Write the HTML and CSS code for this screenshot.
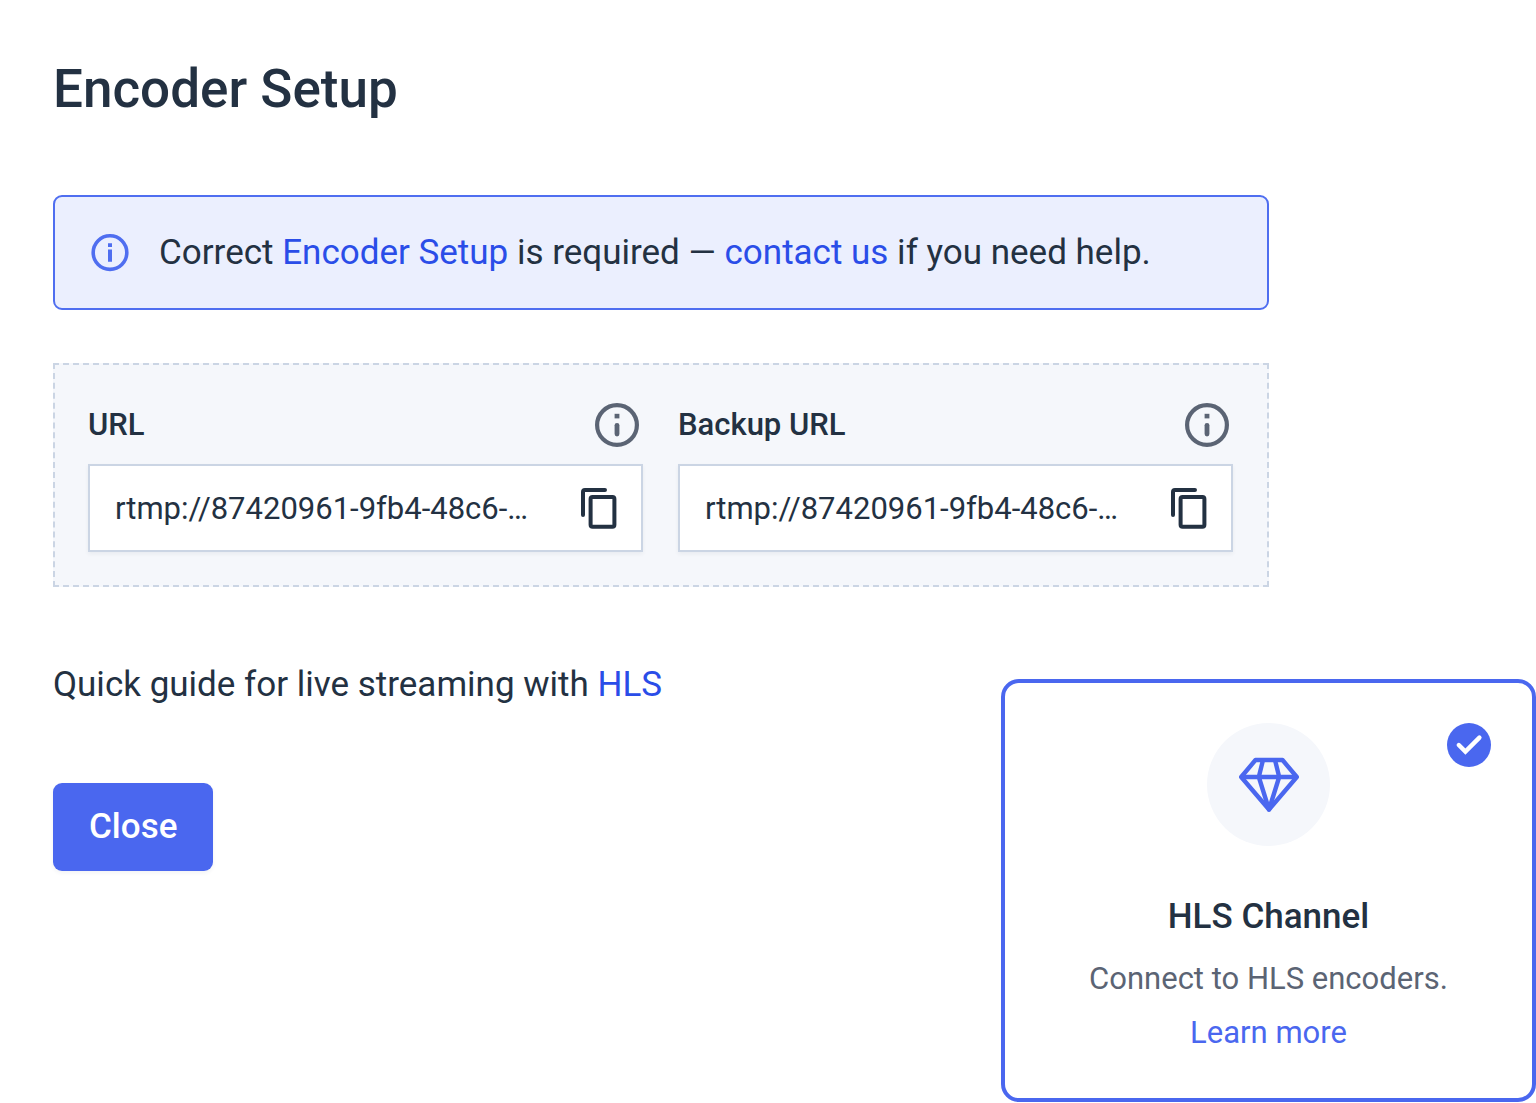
FILE: index.html
```html
<!DOCTYPE html>
<html lang="en">
<head>
    <meta charset="UTF-8">
    <meta name="viewport" content="width=device-width, initial-scale=1.0">
    <title>Encoder Setup</title>
    <link rel="stylesheet" href="styles.css">
</head>
<body>
    <main class="page">
        <h1>Encoder Setup</h1>

        <div class="alert">
            <svg class="alert-icon" width="38" height="38" viewBox="0 0 38 38" fill="none" stroke="currentColor">
                <circle cx="19" cy="18.6" r="16.8" stroke-width="3.6"/>
                <path d="M19 9.3v3.8M19 15.6v12.2" stroke-width="4"/>
            </svg>
            <p>Correct <a href="#">Encoder Setup</a> is required — <a href="#">contact us</a> if you need help.</p>
        </div>

        <div class="panel">
            <div class="field">
                <div class="field-head">
                    <label for="url">URL</label>
                    <button type="button" class="icon-button info" aria-label="About the URL">
                        <svg width="44" height="44" viewBox="0 0 44 44" fill="none" stroke="currentColor">
                            <circle cx="22" cy="22" r="19.9" stroke-width="4.2"/>
                            <path d="M22 10.8v4.6" stroke-width="4.8"/>
                            <path d="M22 22.3v8.8" stroke-width="4.8" stroke-linecap="round"/>
                        </svg>
                    </button>
                </div>
                <div class="input-box">
                    <input type="text" id="url" value="rtmp://87420961-9fb4-48c6-…" readonly>
                    <button type="button" class="icon-button copy" aria-label="Copy URL">
                        <svg width="40" height="44" viewBox="0 0 40 44" fill="none" stroke="currentColor" stroke-width="4" stroke-linecap="round">
                            <path d="M4 29V6a2 2 0 0 1 2-2h20"/>
                            <rect x="11.6" y="11" width="23.8" height="29.8" rx="2"/>
                        </svg>
                    </button>
                </div>
            </div>
            <div class="field">
                <div class="field-head">
                    <label for="backup-url">Backup URL</label>
                    <button type="button" class="icon-button info" aria-label="About the backup URL">
                        <svg width="44" height="44" viewBox="0 0 44 44" fill="none" stroke="currentColor">
                            <circle cx="22" cy="22" r="19.9" stroke-width="4.2"/>
                            <path d="M22 10.8v4.6" stroke-width="4.8"/>
                            <path d="M22 22.3v8.8" stroke-width="4.8" stroke-linecap="round"/>
                        </svg>
                    </button>
                </div>
                <div class="input-box">
                    <input type="text" id="backup-url" value="rtmp://87420961-9fb4-48c6-…" readonly>
                    <button type="button" class="icon-button copy" aria-label="Copy backup URL">
                        <svg width="40" height="44" viewBox="0 0 40 44" fill="none" stroke="currentColor" stroke-width="4" stroke-linecap="round">
                            <path d="M4 29V6a2 2 0 0 1 2-2h20"/>
                            <rect x="11.6" y="11" width="23.8" height="29.8" rx="2"/>
                        </svg>
                    </button>
                </div>
            </div>
        </div>

        <div class="bottom">
            <div class="guide">
                <p>Quick guide for live streaming with <a href="#">HLS</a></p>
                <button type="button" class="close">Close</button>
            </div>

            <section class="card">
                <svg class="check" width="44" height="44" viewBox="0 0 44 44" fill="none">
                    <circle cx="22" cy="22" r="22" fill="#4a67ef"/>
                    <path d="M11.8 22l6.6 6.6L32.4 14.6" stroke="#fff" stroke-width="4.4" stroke-linecap="round"/>
                </svg>
                <div class="card-icon">
                    <svg width="64" height="58" viewBox="0 0 64 58" fill="none" stroke="currentColor" stroke-width="4.4" stroke-linejoin="round">
                        <path d="M18.5 4h27L59.8 21 32 53.5 4.2 21z"/>
                        <path d="M4.2 21h55.6M26 4l-4.2 17L32 53.5 42.2 21 38 4"/>
                    </svg>
                </div>
                <h2>HLS Channel</h2>
                <p>Connect to HLS encoders.</p>
                <a href="#">Learn more</a>
            </section>
        </div>
    </main>
</body>
</html>
```

FILE: styles.css
```css
* {
    box-sizing: border-box;
}
body {
    font-family: Roboto, "Liberation Sans", sans-serif;
    font-size: 35px;
    line-height: 48px;
    color: #233142;
    background: #fff;
    margin: 0;
}
h1, h2, p {
    margin: 0;
    font-weight: 500;
}
p {
    font-weight: 400;
}
a {
    color: #2a4de8;
    text-decoration: none;
}
.page {
    padding: 57px 0 0 53px;
}
h1 {
    font-size: 53px;
    line-height: 64px;
}
.alert {
    display: flex;
    align-items: center;
    gap: 30px;
    margin: 74px 267px 0 0;
    padding: 32px 36px 31px;
    border: 2px solid #4f6ef0;
    border-radius: 9px;
    background: #ebeffe;
}
.alert-icon {
    flex: none;
    color: #4f6ef0;
}
.panel {
    display: grid;
    grid-template-columns: 1fr 1fr;
    gap: 35px;
    margin: 53px 267px 0 0;
    padding: 38px 34px 33px 33px;
    border: 2px dashed #cbd5e4;
    background: #f5f7fb;
}
.field-head {
    display: flex;
    align-items: center;
    justify-content: space-between;
    margin-bottom: 17px;
    padding-right: 4px;
}
.field-head label {
    font-size: 31px;
    line-height: 44px;
    font-weight: 500;
}
.icon-button {
    display: flex;
    flex: none;
    padding: 0;
    border: none;
    background: none;
    cursor: pointer;
}
.info {
    color: #5b6474;
}
.copy {
    color: #233142;
}
.input-box {
    display: flex;
    align-items: center;
    height: 88px;
    padding: 0 22px 0 25px;
    border: 2px solid #cbd5e4;
    background: #fff;
    box-shadow: 0 2px 4px rgba(35, 49, 66, 0.06);
}
.input-box input {
    flex: 1;
    min-width: 0;
    padding: 0;
    border: none;
    outline: none;
    background: none;
    font-family: inherit;
    font-size: 31px;
    color: inherit;
    text-overflow: ellipsis;
}
.bottom {
    display: flex;
    justify-content: space-between;
    align-items: flex-start;
    margin-top: 74px;
}
.close {
    display: block;
    height: 88px;
    margin-top: 74px;
    padding: 0 36px 2px;
    border: none;
    border-radius: 9px;
    background: #4a67ef;
    color: #fff;
    font-family: inherit;
    font-size: 35px;
    font-weight: 500;
    box-shadow: 0 2px 4px rgba(35, 49, 66, 0.06);
    cursor: pointer;
}
.card {
    position: relative;
    flex: none;
    width: 535px;
    margin-top: 18px;
    padding: 40px 40px 38px;
    border: 4px solid #4a67ef;
    border-radius: 18px;
    text-align: center;
    font-size: 31px;
    line-height: 54px;
}
.check {
    position: absolute;
    top: 40px;
    right: 41px;
}
.card-icon {
    display: flex;
    align-items: center;
    justify-content: center;
    width: 123px;
    height: 123px;
    margin: 0 auto 44px;
    border-radius: 50%;
    background: #f5f7fb;
    color: #4a67ef;
}
.card h2 {
    font-size: 35px;
    line-height: 54px;
    margin-bottom: 8px;
}
.card p {
    color: #5b6474;
}
.card a {
    color: #4a67ef;
}
```
